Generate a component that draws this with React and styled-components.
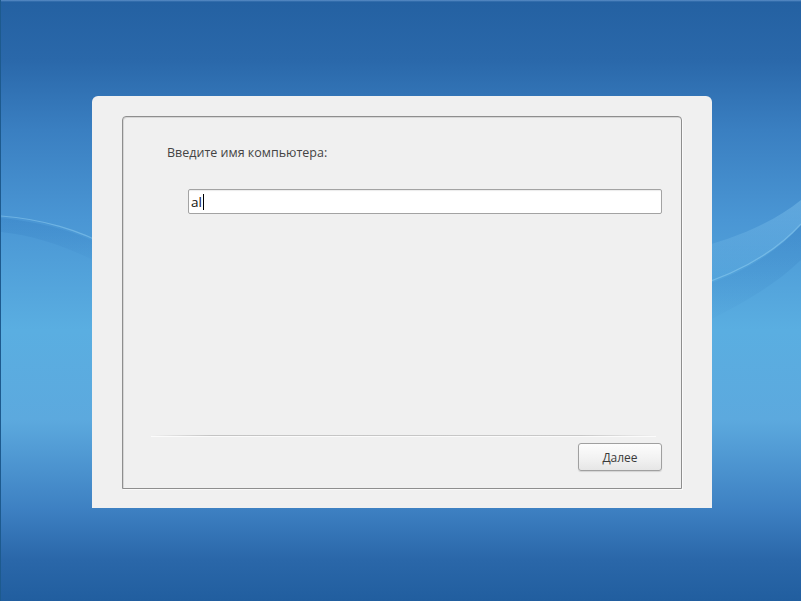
import React from 'react';
import styled, { createGlobalStyle } from 'styled-components';

const GlobalStyle = createGlobalStyle`
  html, body {
    margin: 0;
    padding: 0;
    overflow: hidden;
  }
  body {
    font-family: "Open Sans", "DejaVu Sans", sans-serif;
  }
`;

const Wallpaper = () => (
  <WaveLayer viewBox="0 0 801 601" preserveAspectRatio="none">
    <defs>
      <linearGradient id="glow" x1="0" y1="0" x2="0" y2="1">
        <stop offset="0" stopColor="#8fd0f4" stopOpacity="0.35" />
        <stop offset="1" stopColor="#8fd0f4" stopOpacity="0" />
      </linearGradient>
      <linearGradient id="shade" x1="0" y1="0" x2="0" y2="1">
        <stop offset="0" stopColor="#2f78bd" stopOpacity="0.3" />
        <stop offset="1" stopColor="#2f78bd" stopOpacity="0" />
      </linearGradient>
    </defs>
    {/* left swoosh */}
    <path d="M0 218 C 40 222, 80 232, 110 250 L 110 270 C 80 252, 40 236, 0 232 Z" fill="url(#shade)" />
    <path d="M0 216 C 40 219, 80 230, 110 248" stroke="#9ad4f4" strokeOpacity="0.45" strokeWidth="1.2" fill="none" />
    {/* right swoosh */}
    <path d="M690 290 C 730 278, 770 260, 801 225 L 801 260 C 770 290, 730 310, 690 330 Z" fill="url(#shade)" />
    <path d="M690 288 C 730 276, 770 258, 801 224" stroke="#9ad4f4" strokeOpacity="0.45" strokeWidth="1.2" fill="none" />
    <path d="M690 250 C 730 240, 770 225, 801 200 L 801 224 C 770 258, 730 276, 690 288 Z" fill="url(#glow)" />
  </WaveLayer>
);

const Screen = styled.div`
  position: relative;
  width: 801px;
  height: 601px;
  box-sizing: border-box;
  padding: 96px 0 0 91px;
  background: linear-gradient(
    to bottom,
    #5d8fc8 0px,
    #2461a2 2px,
    #2a68aa 60px,
    #3a7fc1 130px,
    #4a96d4 220px,
    #5aaee1 330px,
    #5ca9de 420px,
    #3d80c2 510px,
    #2a67a9 560px,
    #215e9f 601px
  );
  border-left: 1px solid #1d5a8e;
`;

const WaveLayer = styled.svg`
  position: absolute;
  inset: 0;
  width: 100%;
  height: 100%;
  pointer-events: none;
`;

const Panel = styled.div`
  position: relative;
  width: 620px;
  height: 412px;
  box-sizing: border-box;
  padding: 20px 30px 19px 30px;
  background: #f0f0f0;
  border-radius: 6px 6px 0 0;
`;

const Frame = styled.div`
  height: 100%;
  box-sizing: border-box;
  display: flex;
  flex-direction: column;
  border: 1px solid #8e8e8e;
  border-radius: 4px 4px 0 0;
  box-shadow: inset 1px 1px 0 #d6d6d6, 1px 1px 0 #fafafa;
  padding: 28px 19px 17px 44px;
`;

const Label = styled.div`
  font-size: 12.5px;
  line-height: 16px;
  color: #444;
`;

const Field = styled.div`
  margin: 28px 0 0 21px;
  height: 25px;
  box-sizing: border-box;
  display: flex;
  align-items: center;
  padding: 0 2px;
  background: #fff;
  border: 1px solid #a3a3a3;
  border-radius: 2px;
  box-shadow: inset 0 1px 1px rgba(0, 0, 0, 0.08);
  font-size: 13.5px;
  color: #111;
`;

const Caret = styled.span`
  display: inline-block;
  width: 1px;
  height: 16px;
  margin-left: 1px;
  background: #000;
`;

const Spacer = styled.div`
  flex: 1;
`;

const Separator = styled.div`
  height: 1px;
  margin: 0 6px 7px -16px;
  background: linear-gradient(
    to right,
    rgba(190, 190, 190, 0) 0%,
    #c4c4c4 12%,
    #c8c8c8 85%,
    rgba(200, 200, 200, 0) 100%
  );
  box-shadow: 0 1px 0 #fbfbfb;
`;

const Footer = styled.div`
  display: flex;
  justify-content: flex-end;
`;

const Button = styled.button`
  width: 84px;
  height: 28px;
  box-sizing: border-box;
  padding: 0;
  font-family: "Open Sans", "DejaVu Sans", sans-serif;
  font-size: 12px;
  color: #3a3a3a;
  background: linear-gradient(to bottom, #fdfdfd 0%, #f2f2f2 55%, #e6e6e6 100%);
  border: 1px solid #a0a0a0;
  border-radius: 3px;
  box-shadow: 0 1px 1px rgba(0, 0, 0, 0.12);
`;

export default function App() {
  return (
    <>
      <GlobalStyle />
      <Screen>
        <Wallpaper />
        <Panel>
          <Frame>
            <Label>Введите имя компьютера:</Label>
            <Field>
              al<Caret />
            </Field>
            <Spacer />
            <Separator />
            <Footer>
              <Button>Далее</Button>
            </Footer>
          </Frame>
        </Panel>
      </Screen>
    </>
  );
}
